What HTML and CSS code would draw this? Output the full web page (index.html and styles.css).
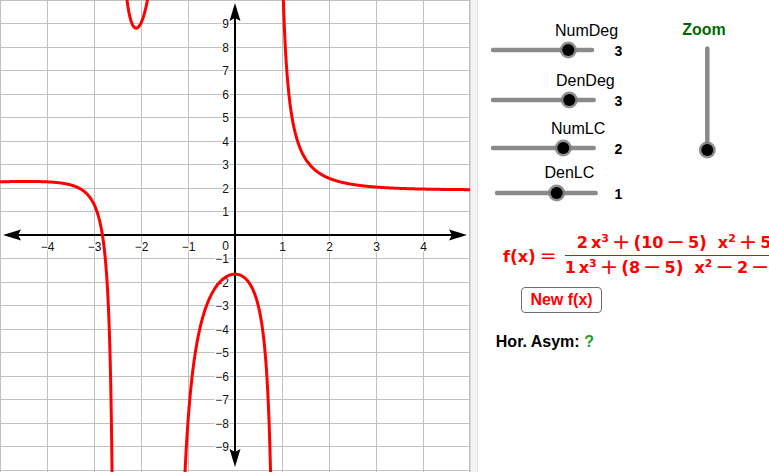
FILE: index.html
```html
<!DOCTYPE html>
<html lang="en">
<head>
<meta charset="utf-8">
<title>Rational function explorer</title>
<link rel="stylesheet" href="styles.css">
</head>
<body>
<div class="app">
  <div class="graph">
    <svg class="plot" width="470" height="472" viewBox="0 0 470 472">
      <path class="grid" d="M0.5 0V472M47.5 0V472M94.5 0V472M141.5 0V472M188.5 0V472M282.5 0V472M329.5 0V472M376.5 0V472M423.5 0V472M469.5 0V472M0 0.5H470M0 23.5H470M0 47.5H470M0 70.5H470M0 94.5H470M0 117.5H470M0 141.5H470M0 164.5H470M0 188.5H470M0 211.5H470M0 258.5H470M0 282.5H470M0 305.5H470M0 329.5H470M0 352.5H470M0 376.5H470M0 399.5H470M0 423.5H470M0 446.5H470M0 470.5H470"/>
      <g class="ticks">
        <text class="ylab" x="229" y="27.8">9</text>
        <text class="ylab" x="229" y="51.8">8</text>
        <text class="ylab" x="229" y="74.8">7</text>
        <text class="ylab" x="229" y="98.8">6</text>
        <text class="ylab" x="229" y="121.8">5</text>
        <text class="ylab" x="229" y="145.8">4</text>
        <text class="ylab" x="229" y="168.8">3</text>
        <text class="ylab" x="229" y="192.8">2</text>
        <text class="ylab" x="229" y="215.8">1</text>
        <text class="ylab" x="229" y="250">0</text>
        <text class="ylab" x="229" y="262.8">−1</text>
        <text class="ylab" x="229" y="286.8">−2</text>
        <text class="ylab" x="229" y="309.8">−3</text>
        <text class="ylab" x="229" y="333.8">−4</text>
        <text class="ylab" x="229" y="356.8">−5</text>
        <text class="ylab" x="229" y="380.8">−6</text>
        <text class="ylab" x="229" y="403.8">−7</text>
        <text class="ylab" x="229" y="427.8">−8</text>
        <text class="ylab" x="229" y="450.8">−9</text>
        <text class="xlab" x="47.5" y="250.5">−4</text>
        <text class="xlab" x="94.5" y="250.5">−3</text>
        <text class="xlab" x="141.5" y="250.5">−2</text>
        <text class="xlab" x="188.5" y="250.5">−1</text>
        <text class="xlab" x="282.5" y="250.5">1</text>
        <text class="xlab" x="329.5" y="250.5">2</text>
        <text class="xlab" x="376.5" y="250.5">3</text>
        <text class="xlab" x="423.5" y="250.5">4</text>
      </g>
      <path class="axis" d="M12 235H458M235 12V458"/>
      <polygon class="arrow" points="235,3 240.5,21 235,18 229.5,21"/>
      <polygon class="arrow" points="235,467 240.5,449 235,452 229.5,449"/>
      <polygon class="arrow" points="3,235 21,229.5 18,235 21,240.5"/>
      <polygon class="arrow" points="467,235 449,229.5 452,235 449,240.5"/>
      <path id="curve" class="curve" d=""/>
    </svg>
  </div>
  <div class="divider"></div>
  <div class="panel">
    <div class="controls">
      <div class="sliders">
        <div class="slabel l1">NumDeg</div>
        <div class="srow">
          <svg class="track" width="120" height="20" viewBox="0 0 120 20"><line x1="5" y1="10" x2="104" y2="10"/><circle class="halo" cx="80.3" cy="10" r="8.5"/><circle class="knob" cx="80.3" cy="10" r="6"/></svg>
          <span class="sval">3</span>
        </div>
        <div class="slabel l2">DenDeg</div>
        <div class="srow">
          <svg class="track" width="120" height="20" viewBox="0 0 120 20"><line x1="5" y1="10" x2="105.7" y2="10"/><circle class="halo" cx="81.3" cy="10" r="8.5"/><circle class="knob" cx="81.3" cy="10" r="6"/></svg>
          <span class="sval">3</span>
        </div>
        <div class="slabel l3">NumLC</div>
        <div class="srow">
          <svg class="track" width="120" height="20" viewBox="0 0 120 20"><line x1="5" y1="10" x2="105.7" y2="10"/><circle class="halo" cx="75.3" cy="10" r="8.5"/><circle class="knob" cx="75.3" cy="10" r="6"/></svg>
          <span class="sval">2</span>
        </div>
        <div class="slabel l4">DenLC</div>
        <div class="srow r4">
          <svg class="track" width="120" height="20" viewBox="0 0 120 20"><line x1="9" y1="10" x2="107.7" y2="10"/><circle class="halo" cx="68.7" cy="10" r="8.5"/><circle class="knob" cx="68.7" cy="10" r="6"/></svg>
          <span class="sval">1</span>
        </div>
      </div>
      <div class="zoomcol">
        <div class="zlabel">Zoom</div>
        <svg class="vtrack" width="60" height="120" viewBox="0 0 60 120"><line x1="33.3" y1="9.5" x2="33.3" y2="111"/><circle class="halo" cx="33.3" cy="111" r="8.5"/><circle class="knob" cx="33.3" cy="111" r="6"/></svg>
      </div>
    </div>
    <div class="formula">
      <div class="lhs">f<span class="p">(</span>x<span class="p">)</span><span class="eq">=</span></div>
      <div class="frac">
        <div class="num">2<span class="v">x</span><sup>3</sup><span class="op">+</span><span class="p">(</span>10<span class="op">−</span>5<span class="p">)</span><span class="v w">x</span><sup>2</sup><span class="op">+</span>5</div>
        <div class="den">1<span class="v">x</span><sup>3</sup><span class="op">+</span><span class="p">(</span>8<span class="op">−</span>5<span class="p">)</span><span class="v w">x</span><sup>2</sup><span class="op">−</span>2<span class="op">−</span>1</div>
      </div>
    </div>
    <button class="newf" type="button">New f(x)</button>
    <div class="asym">Hor. Asym: <span class="q">?</span></div>
  </div>
</div>
<script src="script.js"></script>
</body>
</html>
```

FILE: styles.css
```css
* { box-sizing: border-box; }
html, body { margin: 0; padding: 0; }
body {
  width: 769px;
  height: 472px;
  overflow: hidden;
  background: #fff;
  color: #000;
  font-family: "Liberation Sans", Arial, sans-serif;
}
.app { display: flex; width: 769px; height: 472px; overflow: hidden; }
.graph { width: 470px; height: 472px; flex: none; background: #fff; }
.plot { display: block; }
.grid { stroke: #c0c0c0; stroke-width: 1; fill: none; }
.axis { stroke: #000; stroke-width: 2; fill: none; }
.arrow { fill: #000; }
.ticks text {
  font-family: "Liberation Sans", Arial, sans-serif;
  font-size: 12px;
  fill: #111;
  stroke: #fff;
  stroke-width: 2.5px;
  paint-order: stroke;
  stroke-linejoin: round;
}
.ticks .ylab { text-anchor: end; }
.ticks .xlab { text-anchor: middle; }
.curve { fill: none; stroke: #ff0000; stroke-width: 3; stroke-linejoin: round; stroke-linecap: round; }

.divider {
  width: 8px;
  flex: none;
  background: #f3f3f3;
  border-left: 1px solid #d9d9d9;
  border-right: 1px solid #e4e4e4;
}
.panel { flex: 1; min-width: 0; overflow: hidden; white-space: nowrap; }

.controls { display: flex; height: 203px; }
.sliders { width: 196px; flex: none; padding-top: 21.5px; }
.slabel { font-size: 16px; line-height: 18px; height: 18px; }
.l1 { margin-left: 77px; }
.l2 { margin-left: 78px; margin-top: 12px; }
.l3 { margin-left: 73px; margin-top: 10.3px; }
.l4 { margin-left: 66.5px; margin-top: 6px; }
.srow { display: flex; align-items: flex-start; height: 20px; padding-left: 10px; }
.r4 { margin-top: 1px; }
.track, .vtrack { display: block; flex: none; }
.track line, .vtrack line { stroke: #8a8a8a; stroke-width: 4.5; stroke-linecap: round; }
.halo { fill: #7d7d7d; opacity: 0.85; }
.knob { fill: #000; }
.sval { font-weight: bold; font-size: 14px; line-height: 20px; margin-left: 6.5px; margin-top: 1px; }

.zoomcol { width: 60px; flex: none; padding-top: 20.5px; }
.zlabel { font-weight: bold; font-size: 16px; line-height: 18px; text-align: center; color: #006a00; }

.formula {
  display: flex;
  align-items: flex-start;
  margin-top: 29.5px;
  margin-left: 25px;
  color: #ff0000;
  font-family: "DejaVu Sans", sans-serif;
  font-weight: bold;
  font-size: 16px;
  line-height: 19px;
}
.lhs { margin-top: 14px; flex: none; }
.eq { font-weight: normal; font-size: 20px; line-height: 0; margin-left: 4px; margin-right: 8px; }
.frac { display: flex; flex-direction: column; align-items: stretch; text-align: center; flex: none; }
.num { padding-bottom: 3.5px; border-bottom: 1.5px solid #ff0000; }
.den { padding-top: 1.8px; }
.p { font-size: 17px; line-height: 0; vertical-align: -0.8px; }
.op { font-weight: normal; font-size: 22px; line-height: 0; vertical-align: -1.5px; margin: 0 3px; }
.v { margin-left: 3px; }
.w { margin-left: 11px; }
sup { font-size: 11px; line-height: 0; vertical-align: 6px; }

.newf {
  display: block;
  width: 81px;
  height: 26px;
  margin: 10.7px 0 0 43px;
  padding: 0;
  border: 1px solid #6e6e6e;
  border-radius: 4px;
  background: #fff;
  color: #ff0000;
  font-family: "Liberation Sans", Arial, sans-serif;
  font-weight: bold;
  font-size: 16px;
  line-height: 24px;
  text-align: center;
}
.asym {
  margin: 19.8px 0 0 17.8px;
  font-weight: bold;
  font-size: 16px;
  line-height: 18px;
}
.q { color: #2a9a2a; }
```

FILE: script.js
```js
(function () {
  function f(x) { return (2 * x * x * x + 5 * x * x + 5) / (x * x * x + 3 * x * x - 3); }
  function X(x) { return 235 + 47.1 * x; }
  function Y(y) { return 235 - 23.5 * y; }
  var d = '', pen = false, prev = 0, N = 6000;
  for (var i = 0; i <= N; i++) {
    var x = -5.1 + 10.2 * i / N, y = f(x);
    if (!isFinite(y) || Math.abs(y) > 15) { pen = false; continue; }
    if (pen && prev * y < 0 && Math.abs(prev - y) > 3) pen = false;
    d += (pen ? 'L' : 'M') + X(x).toFixed(2) + ' ' + Y(y).toFixed(2);
    pen = true; prev = y;
  }
  document.getElementById('curve').setAttribute('d', d);
})();
```
